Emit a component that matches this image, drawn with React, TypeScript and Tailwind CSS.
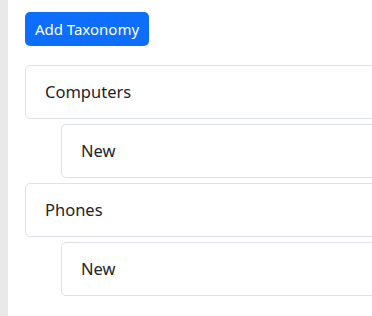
const taxonomies = [
  { id: 1, name: "Computers", children: ["New"] },
  { id: 2, name: "Phones", children: ["New"] },
];

function Row({ label, nested }: { label: string; nested?: boolean }) {
  return (
    <div
      className={`h-[54px] w-[400px] flex items-center border border-[#dee2e6] rounded-[5px] bg-white pl-[19px] pt-px text-[16.5px] text-[#212529] ${
        nested ? "ml-[36px]" : ""
      }`}
    >
      {label}
    </div>
  );
}

export default function App() {
  return (
    <div
      className="flex h-[316px] w-[372px] overflow-hidden bg-white"
      style={{ fontFamily: '"Noto Sans", "Open Sans", sans-serif' }}
    >
      <div className="w-2 shrink-0 bg-[#e9e9e9]" />
      <div className="pl-[17px] pt-3">
        <button className="h-[34px] w-[124px] rounded-[5px] bg-[#0d6efd] text-white text-[15px] leading-none">
          Add Taxonomy
        </button>
        <div className="mt-[19px] flex flex-col gap-[5px]">
          {taxonomies.map((t) => (
            <div key={t.id} className="flex flex-col gap-[5px]">
              <Row label={t.name} />
              {t.children.map((c, i) => (
                <Row key={i} label={c} nested />
              ))}
            </div>
          ))}
        </div>
      </div>
    </div>
  );
}
